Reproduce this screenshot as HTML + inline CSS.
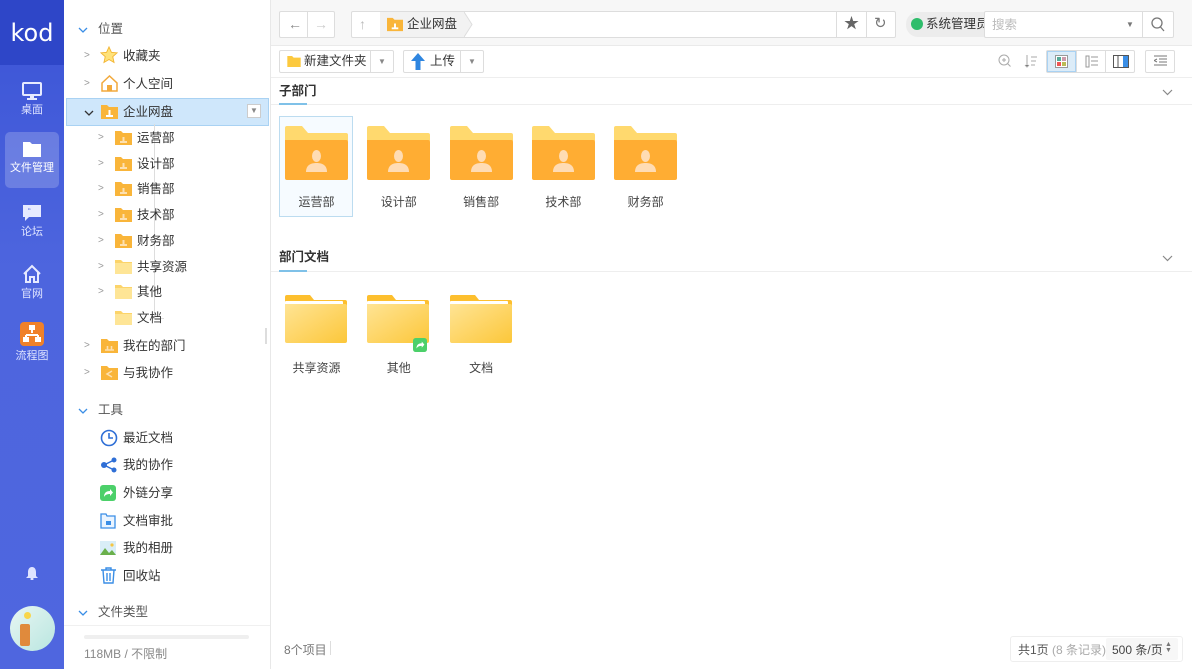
<!DOCTYPE html>
<html><head><meta charset="utf-8"><style>
*{box-sizing:border-box;margin:0;padding:0}
body{width:1192px;height:669px;overflow:hidden;font-family:"Liberation Sans","Noto Sans CJK SC",sans-serif;font-size:12px;line-height:1.2;color:#333;background:#fff;position:relative}
.abs{position:absolute}
#nav{left:0;top:0;width:64px;height:669px;background:linear-gradient(#3b54d6,#4d65de 40%,#4f66df);}
#logo{left:0;top:0;width:64px;height:65px;background:#2e46c8;color:#fff;font:24px "DejaVu Sans",sans-serif;text-align:center;line-height:66px;letter-spacing:0px}
.ni{position:absolute;left:5px;width:54px;height:56px;color:#dfe4ff;font-size:11px;line-height:1.5;text-align:center}
.ni svg{display:block;margin:8px auto 2px}
#tree{left:64px;top:0;width:207px;height:669px;background:#fff;border-right:1px solid #e8e8e8}
.t{position:absolute;height:26px;line-height:26px;font-size:12.5px;color:#333;white-space:nowrap}
.t .ar{position:absolute;color:#999;font-size:10px}
.t svg{position:absolute;top:5px}
.t span.l{position:absolute}
.hd{color:#555}
.btn{position:absolute;border:1px solid #ddd;background:#fff;border-radius:2px}
.fold{position:absolute;text-align:center;font-size:12px;color:#444}
.t svg.cv{position:absolute;top:11px;left:0}
</style></head><body>
<div id="nav" class="abs">
 <div id="logo" class="abs">kod</div>
 <div class="ni" style="top:74px"><svg width="20" height="18" viewBox="0 0 20 18"><rect x="1" y="1" width="18" height="12" rx="1" fill="none" stroke="#e6eaff" stroke-width="2"/><rect x="8" y="13" width="4" height="3" fill="#e6eaff"/><rect x="5" y="16" width="10" height="2" fill="#e6eaff"/></svg>桌面</div>
 <div class="ni" style="top:132px;background:rgba(255,255,255,.2);border-radius:5px;color:#fff"><svg width="20" height="18" viewBox="0 0 20 18"><path d="M1 2h7l2 2h9v13H1z" fill="#fff"/></svg>文件管理</div>
 <div class="ni" style="top:196px"><svg width="20" height="18" viewBox="0 0 20 18"><path d="M1 1h18v12H7l-4 4v-4H1z" fill="#e6eaff"/><text x="6" y="10" font-size="8" fill="#4d65de">“</text></svg>论坛</div>
 <div class="ni" style="top:256px"><svg width="20" height="20" viewBox="0 0 20 20"><path d="M2 10L10 2l8 8M4 8v10h4v-5h4v5h4V8" fill="none" stroke="#e6eaff" stroke-width="2"/></svg>官网</div>
 <div class="ni" style="top:316px;color:#dfe4ff"><svg width="24" height="24" viewBox="0 0 24 24" style="margin-top:6px"><rect width="24" height="24" rx="4" fill="#f0812a"/><path d="M12 5v6M6 13h12M6 13v4M18 13v4" stroke="#fff" stroke-width="2" fill="none"/><rect x="9" y="3" width="6" height="5" fill="#fff"/><rect x="3" y="15" width="6" height="5" fill="#fff"/><rect x="15" y="15" width="6" height="5" fill="#fff"/></svg>流程图</div>
 <svg class="abs" style="left:26px;top:566px" width="12" height="14" viewBox="0 0 12 14"><path d="M6 1C3 1 2 4 2 6v4L0 12h12l-2-2V6c0-2-1-5-4-5z" fill="#dfe4ff"/><circle cx="6" cy="13" r="1.5" fill="#dfe4ff"/></svg>
 <div class="abs" style="left:10px;top:606px;width:45px;height:45px;border-radius:50%;background:linear-gradient(135deg,#e8f6f3,#b9e6e0);overflow:hidden"><div class="abs" style="left:10px;top:18px;width:10px;height:22px;background:#e08a3c;border-radius:2px"></div><div class="abs" style="left:14px;top:6px;width:7px;height:7px;background:#f8d64a;border-radius:50%"></div></div>
</div>

<div id="tree" class="abs">
 <div class="t hd" style="left:14px;top:16px"><svg class="cv" width="10" height="6"><path d="M1 1l4 4 4-4" stroke="#3a8ee6" fill="none" stroke-width="1.3"/></svg><span class="l" style="left:20px">位置</span></div>
 <div class="t" style="left:20px;top:43px"><span class="ar" style="left:0">&gt;</span><svg style="left:16px;top:3px" width="18" height="18" viewBox="0 0 20 20"><path d="M10 1l2.7 6 6.3.6-4.8 4.3 1.4 6.4L10 15l-5.6 3.3 1.4-6.4L1 7.6 7.3 7z" fill="#ffe27a" stroke="#f2b431"/></svg><span class="l" style="left:39px">收藏夹</span></div>
 <div class="t" style="left:20px;top:71px"><span class="ar" style="left:0">&gt;</span><svg style="left:17px;top:4px" width="17" height="17" viewBox="0 0 17 17"><path d="M1 8L8.5 1 16 8v8H1z" fill="#fff" stroke="#f2a93b" stroke-width="1.5"/><rect x="6" y="10" width="5" height="6" fill="#f2a93b"/></svg><span class="l" style="left:39px">个人空间</span></div>
 <div class="abs" style="left:2px;top:98px;width:203px;height:28px;background:#cfe7fb;border:1px solid #a9d2f3"></div>
 <div class="t" style="left:20px;top:99px"><svg class="cv" width="10" height="6"><path d="M1 1l4 4 4-4" stroke="#333" fill="none" stroke-width="1.3"/></svg><svg style="left:17px;top:6px" width="17" height="14" viewBox="0 0 17 14"><path d="M0 0h6l2 2h9v12H0z" fill="#f9b53a"/><path d="M5 11h7M8.5 5v6" stroke="#fff" stroke-width="2"/></svg><span class="l" style="left:39px">企业网盘</span></div>
 <div class="abs" style="left:183px;top:104px;width:14px;height:14px;border:1px solid #ccc;background:#fff;font-size:8px;color:#888;text-align:center;line-height:12px">▼</div>
 <div class="abs" style="left:90px;top:124px;width:1px;height:195px;background:#ddd"></div>
 <div class="abs" style="left:90px;top:318px;width:10px;height:1px;background:#ddd"></div>
 <div class="t" style="left:34px;top:125px"><span class="ar" style="left:0">&gt;</span><svg style="left:17px;top:6px" width="17" height="14" viewBox="0 0 17 14"><path d="M0 0h6l2 2h9v12H0z" fill="#f9b53a"/><path d="M5 11h7M8.5 6v5" stroke="#fde0b0" stroke-width="2"/></svg><span class="l" style="left:39px">运营部</span></div>
 <div class="t" style="left:34px;top:151px"><span class="ar" style="left:0">&gt;</span><svg style="left:17px;top:6px" width="17" height="14" viewBox="0 0 17 14"><path d="M0 0h6l2 2h9v12H0z" fill="#f9b53a"/><path d="M5 11h7M8.5 6v5" stroke="#fde0b0" stroke-width="2"/></svg><span class="l" style="left:39px">设计部</span></div>
 <div class="t" style="left:34px;top:176px"><span class="ar" style="left:0">&gt;</span><svg style="left:17px;top:6px" width="17" height="14" viewBox="0 0 17 14"><path d="M0 0h6l2 2h9v12H0z" fill="#f9b53a"/><path d="M5 11h7M8.5 6v5" stroke="#fde0b0" stroke-width="2"/></svg><span class="l" style="left:39px">销售部</span></div>
 <div class="t" style="left:34px;top:202px"><span class="ar" style="left:0">&gt;</span><svg style="left:17px;top:6px" width="17" height="14" viewBox="0 0 17 14"><path d="M0 0h6l2 2h9v12H0z" fill="#f9b53a"/><path d="M5 11h7M8.5 6v5" stroke="#fde0b0" stroke-width="2"/></svg><span class="l" style="left:39px">技术部</span></div>
 <div class="t" style="left:34px;top:228px"><span class="ar" style="left:0">&gt;</span><svg style="left:17px;top:6px" width="17" height="14" viewBox="0 0 17 14"><path d="M0 0h6l2 2h9v12H0z" fill="#f9b53a"/><path d="M5 11h7M8.5 6v5" stroke="#fde0b0" stroke-width="2"/></svg><span class="l" style="left:39px">财务部</span></div>
 <div class="t" style="left:34px;top:254px"><span class="ar" style="left:0">&gt;</span><svg style="left:17px;top:6px" width="17" height="14" viewBox="0 0 17 14"><path d="M0 0h6l2 2h9v12H0z" fill="#fcd46a"/><rect y="3" width="17" height="11" fill="#fee596"/></svg><span class="l" style="left:39px">共享资源</span></div>
 <div class="t" style="left:34px;top:279px"><span class="ar" style="left:0">&gt;</span><svg style="left:17px;top:6px" width="17" height="14" viewBox="0 0 17 14"><path d="M0 0h6l2 2h9v12H0z" fill="#fcd46a"/><rect y="3" width="17" height="11" fill="#fee596"/></svg><span class="l" style="left:39px">其他</span></div>
 <div class="t" style="left:34px;top:305px"><svg style="left:17px;top:6px" width="17" height="14" viewBox="0 0 17 14"><path d="M0 0h6l2 2h9v12H0z" fill="#fcd46a"/><rect y="3" width="17" height="11" fill="#fee596"/></svg><span class="l" style="left:39px">文档</span></div>
 <div class="abs" style="left:201px;top:328px;width:2px;height:16px;background:#ddd"></div>
 <div class="t" style="left:20px;top:333px"><span class="ar" style="left:0">&gt;</span><svg style="left:17px;top:6px" width="17" height="14" viewBox="0 0 17 14"><path d="M0 0h6l2 2h9v12H0z" fill="#f9b53a"/><path d="M4 11h9M6.5 7v4M10.5 7v4" stroke="#fde0b0" stroke-width="1.6"/></svg><span class="l" style="left:39px">我在的部门</span></div>
 <div class="t" style="left:20px;top:360px"><span class="ar" style="left:0">&gt;</span><svg style="left:17px;top:6px" width="17" height="14" viewBox="0 0 17 14"><path d="M0 0h6l2 2h9v12H0z" fill="#f9b53a"/><path d="M11 5L6 8l5 3" stroke="#fde0b0" stroke-width="1.5" fill="none"/></svg><span class="l" style="left:39px">与我协作</span></div>
 <div class="t hd" style="left:14px;top:397px"><svg class="cv" width="10" height="6"><path d="M1 1l4 4 4-4" stroke="#3a8ee6" fill="none" stroke-width="1.3"/></svg><span class="l" style="left:20px">工具</span></div>
 <div class="t" style="left:36px;top:425px"><svg style="left:0;top:4px" width="18" height="18" viewBox="0 0 18 18"><circle cx="9" cy="9" r="7.5" fill="none" stroke="#2f6fd6" stroke-width="1.6"/><path d="M9 4v5h4" stroke="#2f6fd6" stroke-width="1.6" fill="none"/></svg><span class="l" style="left:23px">最近文档</span></div>
 <div class="t" style="left:36px;top:452px"><svg style="left:0;top:5px" width="18" height="16" viewBox="0 0 18 16"><circle cx="4" cy="8" r="3" fill="#2f6fd6"/><circle cx="14" cy="3" r="2.5" fill="#2f6fd6"/><circle cx="14" cy="13" r="2.5" fill="#2f6fd6"/><path d="M4 8l10-5M4 8l10 5" stroke="#2f6fd6" stroke-width="1.5"/></svg><span class="l" style="left:23px">我的协作</span></div>
 <div class="t" style="left:36px;top:480px"><svg style="left:0;top:5px" width="16" height="16" viewBox="0 0 16 16"><rect width="16" height="16" rx="3" fill="#4cd06a"/><path d="M4 12c0-4 2-6 6-6V4l3 3.5L10 11V9c-3 0-5 1-6 3z" fill="#fff"/></svg><span class="l" style="left:23px">外链分享</span></div>
 <div class="t" style="left:36px;top:508px"><svg style="left:0;top:5px" width="16" height="16" viewBox="0 0 16 16"><path d="M1 1h5l1 2h8v12H1z" fill="#eaf4ff" stroke="#3a8ee6" stroke-width="1.3"/><rect x="6" y="8" width="5" height="4" fill="#3a8ee6"/></svg><span class="l" style="left:23px">文档审批</span></div>
 <div class="t" style="left:36px;top:535px"><svg style="left:0;top:6px" width="16" height="14" viewBox="0 0 16 14"><rect width="16" height="14" fill="#d9eef7"/><path d="M0 14l5-7 4 5 3-3 4 5z" fill="#6ab04c"/><circle cx="12" cy="4" r="1.6" fill="#f5c542"/></svg><span class="l" style="left:23px">我的相册</span></div>
 <div class="t" style="left:36px;top:563px"><svg style="left:1px;top:4px" width="15" height="17" viewBox="0 0 15 17"><path d="M0 3h15M5 3V1h5v2M2 3l1 13h9l1-13M6 6v8M9 6v8" stroke="#3a8ee6" stroke-width="1.4" fill="none"/></svg><span class="l" style="left:23px">回收站</span></div>
 <div class="t hd" style="left:14px;top:599px"><svg class="cv" width="10" height="6"><path d="M1 1l4 4 4-4" stroke="#3a8ee6" fill="none" stroke-width="1.3"/></svg><span class="l" style="left:20px">文件类型</span></div>
 <div class="abs" style="left:0;top:625px;width:206px;height:1px;background:#f0f0f0"></div>
 <div class="abs" style="left:20px;top:635px;width:165px;height:4px;background:#efefef;border-radius:2px"></div>
 <div class="abs" style="left:20px;top:647px;color:#888;font-size:12px">118MB / 不限制</div>
</div>

<div class="abs" style="left:271px;top:0;width:921px;height:46px;background:#f7f7f7;border-bottom:1px solid #eaeaea"></div>
<div class="btn" style="left:279px;top:11px;width:56px;height:27px;background:#fff"><span class="abs" style="left:8px;top:4px;color:#888;font-size:14px">←</span><span class="abs" style="left:34px;top:4px;color:#ccc;font-size:14px">→</span><div class="abs" style="left:27px;top:0;width:1px;height:25px;background:#ddd"></div></div>
<div class="btn" style="left:351px;top:11px;width:545px;height:27px;background:#fff"></div>
<span class="abs" style="left:359px;top:16px;color:#bbb;font-size:14px">↑</span>
<div class="abs" style="left:380px;top:12px;width:85px;height:25px;background:#f2f2f2"></div>
<svg class="abs" style="left:464px;top:12px" width="10" height="25"><path d="M0 0l8 12.5L0 25" fill="#f2f2f2" stroke="#ddd"/></svg>
<svg class="abs" style="left:387px;top:17px" width="16" height="15" viewBox="0 0 17 14"><path d="M0 0h6l2 2h9v12H0z" fill="#f9b53a"/><path d="M5 11h7M8.5 6v5" stroke="#fff" stroke-width="2"/></svg>
<span class="abs" style="left:407px;top:17px;font-size:12.5px">企业网盘</span>
<div class="abs" style="left:836px;top:12px;width:1px;height:25px;background:#ddd"></div>
<div class="abs" style="left:866px;top:12px;width:1px;height:25px;background:#ddd"></div>
<span class="abs" style="left:844px;top:15px;color:#666;font-size:15px">★</span>
<span class="abs" style="left:874px;top:15px;color:#777;font-size:15px">↻</span>
<div class="abs" style="left:906px;top:12px;width:90px;height:25px;background:#ececec;border-radius:12px"></div>
<div class="abs" style="left:911px;top:18px;width:12px;height:12px;border-radius:50%;background:#2ebd6b"></div>
<span class="abs" style="left:926px;top:17px;font-size:12.5px">系统管理员</span>
<div class="btn" style="left:984px;top:11px;width:190px;height:27px;background:#fff"><span class="abs" style="left:7px;top:6px;color:#bbb;font-size:12.5px">搜索</span><span class="abs" style="left:141px;top:8px;color:#777;font-size:8px">▼</span><div class="abs" style="left:157px;top:0;width:1px;height:25px;background:#ddd"></div>
<svg class="abs" style="left:166px;top:5px" width="14" height="15"><circle cx="6" cy="6" r="5" fill="none" stroke="#777" stroke-width="1.3"/><path d="M9.5 10l3.5 4" stroke="#777" stroke-width="1.3"/></svg></div>

<div class="btn" style="left:279px;top:50px;width:115px;height:23px"><svg class="abs" style="left:7px;top:5px" width="14" height="11" viewBox="0 0 17 14"><path d="M0 0h6l2 2h9v12H0z" fill="#fcc93e"/></svg><span class="abs" style="left:24px;top:3px;font-size:12.5px">新建文件夹</span><div class="abs" style="left:90px;top:0;width:1px;height:21px;background:#ddd"></div><span class="abs" style="left:98px;top:6px;font-size:8px;color:#888">▼</span></div>
<div class="btn" style="left:403px;top:50px;width:81px;height:23px"><svg class="abs" style="left:7px;top:2px" width="14" height="17"><path d="M7 0l7 8H9.5v9h-5V8H0z" fill="#2f86e0"/></svg><span class="abs" style="left:26px;top:3px;font-size:12.5px">上传</span><div class="abs" style="left:56px;top:0;width:1px;height:21px;background:#ddd"></div><span class="abs" style="left:64px;top:6px;font-size:8px;color:#888">▼</span></div>
<svg class="abs" style="left:998px;top:54px" width="14" height="14"><circle cx="6" cy="6" r="5" fill="none" stroke="#aaa"/><path d="M9.5 9.5l3 3M4 6h4M6 4v4" stroke="#aaa"/></svg>
<svg class="abs" style="left:1024px;top:55px" width="14" height="13"><path d="M3 0v12M1 10l2 2 2-2M7 2h6M7 6h5M7 10h4" stroke="#aaa"/></svg>
<div class="btn" style="left:1046px;top:50px;width:89px;height:23px"><div class="abs" style="left:0;top:0;width:29px;height:21px;background:#dcecf8;border:1px solid #a9d2f3"></div><div class="abs" style="left:29px;top:0;width:1px;height:21px;background:#ddd"></div><div class="abs" style="left:58px;top:0;width:1px;height:21px;background:#ddd"></div>
<svg class="abs" style="left:8px;top:4px" width="13" height="13"><rect x="0.5" y="0.5" width="12" height="12" fill="#fff" stroke="#999"/><rect x="2" y="2" width="4" height="4" fill="#5a9"/><rect x="7" y="2" width="4" height="4" fill="#c9a"/><rect x="2" y="7" width="4" height="4" fill="#e55"/><rect x="7" y="7" width="4" height="4" fill="#bb5"/></svg>
<svg class="abs" style="left:38px;top:4px" width="14" height="13"><path d="M1 1h3v11H1zM6 2h7M6 6h7M6 10h7" stroke="#999" fill="none"/></svg>
<svg class="abs" style="left:66px;top:4px" width="16" height="13"><rect x="0.5" y="0.5" width="15" height="12" fill="none" stroke="#555"/><rect x="10" y="1" width="5" height="11" fill="#3a8ee6"/><path d="M5 1v11" stroke="#555"/></svg></div>
<div class="btn" style="left:1145px;top:50px;width:30px;height:23px"><svg class="abs" style="left:8px;top:4px" width="13" height="12"><path d="M0 1h13M5 4h8M5 7h8M0 10h13M3 4L0 5.5 3 7" stroke="#777" fill="none"/></svg></div>
<div class="abs" style="left:271px;top:77px;width:921px;height:1px;background:#eee"></div>

<span class="abs" style="left:279px;top:84px;font-size:12.5px;font-weight:bold;color:#333">子部门</span>
<svg class="abs" style="left:1162px;top:89px" width="11" height="7"><path d="M1 1l4.5 4.5L10 1" stroke="#888" fill="none" stroke-width="1.2"/></svg>
<div class="abs" style="left:271px;top:104px;width:921px;height:1px;background:#eee"></div>
<div class="abs" style="left:279px;top:103px;width:28px;height:2px;background:#7fc1e8"></div>
<div class="abs" style="left:279px;top:116px;width:74px;height:101px;border:1px solid #bcdcf0;background:#f6fbff"></div>

<span class="abs" style="left:279px;top:250px;font-size:12.5px;font-weight:bold;color:#333">部门文档</span>
<svg class="abs" style="left:1162px;top:255px" width="11" height="7"><path d="M1 1l4.5 4.5L10 1" stroke="#888" fill="none" stroke-width="1.2"/></svg>
<div class="abs" style="left:271px;top:271px;width:921px;height:1px;background:#eee"></div>
<div class="abs" style="left:279px;top:270px;width:28px;height:2px;background:#7fc1e8"></div>

<div id="folders"></div>
<script>
var names=["运营部","设计部","销售部","技术部","财务部"],h="";
names.forEach(function(n,i){var x=285+i*82.3;
h+='<svg class="abs" style="left:'+x+'px;top:126px" width="63" height="54" viewBox="0 0 63 54"><path d="M0 2a2 2 0 012-2h15l6 7h38a2 2 0 012 2v6H0z" fill="#ffd96e"/><path d="M0 14h61a2 2 0 012 2v36a2 2 0 01-2 2H2a2 2 0 01-2-2z" fill="#ffad33"/><ellipse cx="31.5" cy="30" rx="4.5" ry="6" fill="#ffdcb4"/><path d="M21 46c0-7 5-9 10.5-9S42 39 42 46z" fill="#ffdcb4"/></svg><div class="fold" style="left:'+(x-10)+'px;top:195px;width:83px">'+n+'</div>';});
var n2=["共享资源","其他","文档"];
n2.forEach(function(n,i){var x=285+i*82.3;
h+='<svg class="abs" style="left:'+x+'px;top:295px" width="62" height="50" viewBox="0 0 62 50"><path d="M0 2a2 2 0 012-2h23l4 5h31a2 2 0 012 2v8H0z" fill="#fdbf2e"/><rect y="6" width="58" height="10" fill="#fff" rx="1"/><path d="M0 9h60a2 2 0 012 2v35a2 2 0 01-2 2H2a2 2 0 01-2-2z" fill="url(#g)"/></svg><div class="fold" style="left:'+(x-10)+'px;top:361px;width:83px">'+n+'</div>';});
h+='<svg width="0" height="0" style="position:absolute"><defs><linearGradient id="g" x1="0" y1="0" x2="1" y2="1"><stop offset="0" stop-color="#ffe494"/><stop offset="1" stop-color="#fcc73a"/></linearGradient></defs></svg>';
h+='<svg class="abs" style="left:413px;top:338px" width="14" height="14" viewBox="0 0 16 16"><rect width="16" height="16" rx="3" fill="#4cd06a"/><path d="M4 12c0-4 2-6 6-6V4l3 3.5L10 11V9c-3 0-5 1-6 3z" fill="#fff"/></svg>';
document.getElementById("folders").innerHTML=h;
</script>

<div class="abs" style="left:271px;top:630px;width:921px;height:39px;background:#fff"></div>
<span class="abs" style="left:284px;top:643px;color:#777;font-size:12px">8个项目</span>
<div class="abs" style="left:330px;top:641px;width:1px;height:14px;background:#ddd"></div>
<div class="abs" style="left:1010px;top:636px;width:173px;height:26px;border:1px solid #eee;border-radius:3px"></div>
<span class="abs" style="left:1018px;top:643px;font-size:12px;color:#555">共1页 <span style="color:#aaa">(8 条记录)</span></span>
<div class="abs" style="left:1106px;top:638px;width:72px;height:22px;background:#f7f7f7;border-radius:2px"></div>
<span class="abs" style="left:1112px;top:643px;font-size:12px;color:#444">500 条/页</span>
<span class="abs" style="left:1165px;top:642px;font-size:7px;color:#777;line-height:6px">▲<br>▼</span>
</body></html>
